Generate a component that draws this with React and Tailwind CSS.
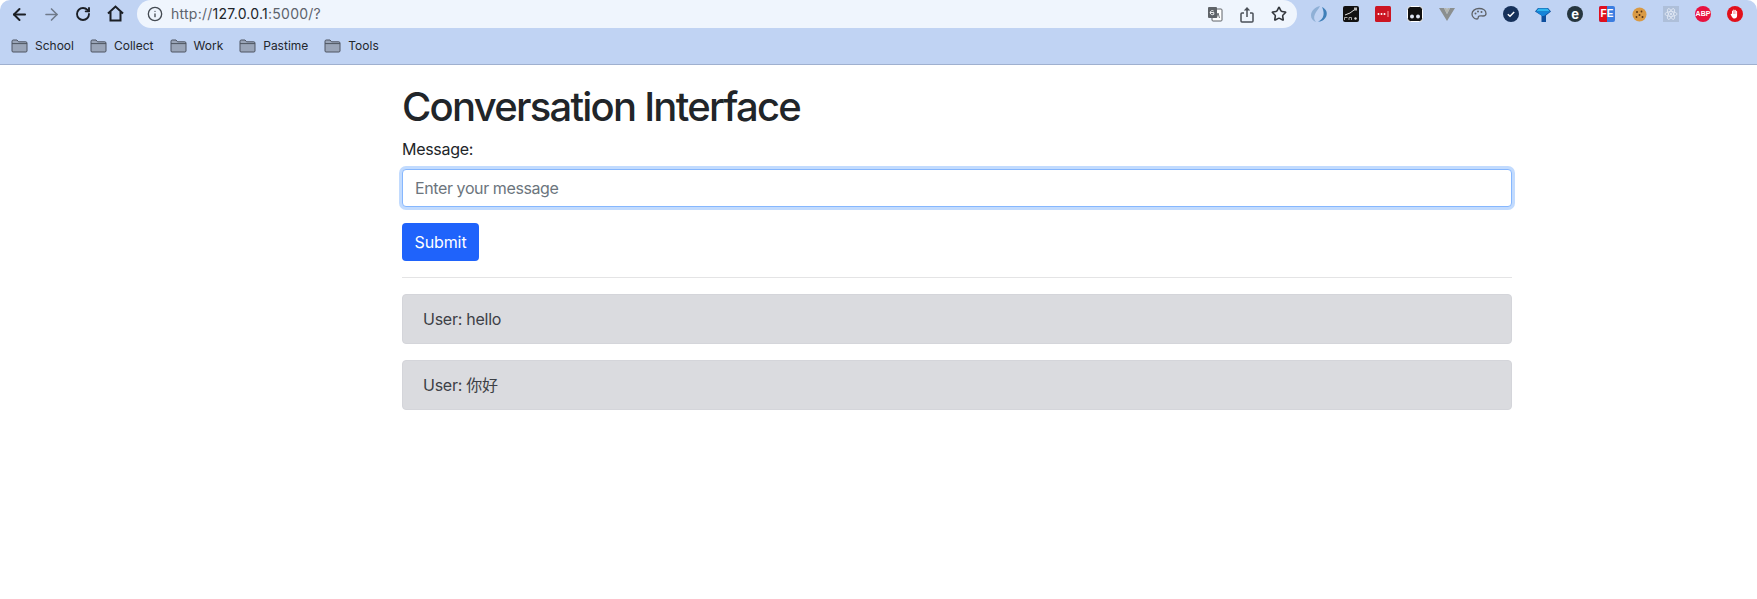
import { ArrowLeft, ArrowRight, RotateCw, Info, Star } from 'lucide-react'

const sans = "font-['Inter','Noto_Sans_CJK_SC',sans-serif]"

function Folder() {
  return (
    <svg width="17" height="14" viewBox="0 0 17 14" className="shrink-0">
      <path d="M1 12V2.200C1 1.500 1.500 1 2.200 1H6l1.600 1.800h7.200c.7 0 1.200.5 1.200 1.200v8c0 .6-.5 1-1.100 1H2c-.6 0-1-.4-1-1z" fill="#9aa5b8" stroke="#4e5562" strokeWidth="1" />
      <path d="M1 4.600h15" stroke="#4e5562" strokeWidth="1" />
    </svg>
  )
}

function Extension({ children }) {
  return <div className="w-8 h-7 flex items-center justify-center">{children}</div>
}

function Extensions() {
  return (
    <div className="flex ml-[6px]">
      <Extension>
        <svg width="18" height="18" viewBox="0 0 18 18" fill="none">
          <path d="M10 1C5 2 1 6 1 10.500c0 3 2 5.500 5 6.500-2-2-2.500-5-1-8 1-3 4-5 5-8z" fill="#8fb0d6" />
          <path d="M12 2c4 2 5.500 5 4.500 8.500C15.500 14 12 17 8 16.500c3-1 5-3.500 5.500-6.500.5-3-.5-6-1.500-8z" fill="#3f7fb8" />
        </svg>
      </Extension>
      <Extension>
        <svg width="16" height="16" viewBox="0 0 16 16">
          <rect width="16" height="16" rx="2" fill="#111" />
          <path d="M2 9l5-2 4-3" stroke="#ddd" strokeWidth="1" fill="none" />
          <rect x="11" y="1.500" width="3" height="3" fill="#bbb" />
          <circle cx="12.500" cy="12.500" r="1.200" fill="#ddd" />
          <path d="M1.500 14v-2.500h3M6 14v-2.500h2.500V14" stroke="#ccc" strokeWidth="0.800" fill="none" />
        </svg>
      </Extension>
      <Extension>
        <svg width="16" height="16" viewBox="0 0 16 16">
          <rect width="16" height="16" rx="1.500" fill="#cc1522" />
          <circle cx="3.500" cy="8" r="1" fill="#fff" />
          <circle cx="6.500" cy="8" r="1" fill="#fff" />
          <circle cx="9.500" cy="8" r="1" fill="#fff" />
          <path d="M13 5v6" stroke="#f3a0a5" strokeWidth="1" />
        </svg>
      </Extension>
      <Extension>
        <svg width="16" height="16" viewBox="0 0 16 16">
          <rect x="0.500" y="0.500" width="15" height="15" rx="3" fill="#111" stroke="#fff" />
          <circle cx="5" cy="10.500" r="2" fill="#dfe6f2" />
          <circle cx="11" cy="10.500" r="2" fill="#dfe6f2" />
        </svg>
      </Extension>
      <Extension>
        <svg width="16" height="14" viewBox="0 0 16 14">
          <path d="M0 1h5l3 6 3-6h5L8 14z" fill="#8b8f8f" />
          <path d="M5 1h2.500L8 3l.5-2H11L8 7z" fill="#b4b6ae" />
        </svg>
      </Extension>
      <Extension>
        <svg width="16" height="14" viewBox="0 0 16 14" fill="none">
          <path d="M8 1.500C4 1.500 1 4 1 7s2.500 5 5 5c1.500 0 1-1.500 1.500-2.500S10 9 12 9c2 0 3-1 3-2.500C15 3.500 12 1.500 8 1.500z" stroke="#5f6368" strokeWidth="1.300" />
          <circle cx="4.500" cy="6.500" r="1" fill="#5f6368" />
          <circle cx="7" cy="4.500" r="1" fill="#5f6368" />
          <circle cx="10.500" cy="5" r="1" fill="#5f6368" />
        </svg>
      </Extension>
      <Extension>
        <svg width="16" height="16" viewBox="0 0 16 16" fill="none">
          <circle cx="8" cy="8" r="8" fill="#16315a" />
          <path d="M4.800 8.300l2.200 2 4.200-4.300" stroke="#fff" strokeWidth="1.500" />
        </svg>
      </Extension>
      <Extension>
        <svg width="16" height="15" viewBox="0 0 16 15">
          <path d="M3 1h10l3 3.500-5 4V15H6.500V8.500L0 4.500z" fill="#0d4f9e" />
          <path d="M3.500 1.500h9l2.500 3H1z" fill="#2fb5f0" />
          <path d="M1 4.500h14L9 9H7z" fill="#1483d8" />
        </svg>
      </Extension>
      <Extension>
        <div className={`w-4 h-4 rounded-full bg-[#26363f] text-white text-[13px] leading-4 font-bold text-center ${sans}`}>e</div>
      </Extension>
      <Extension>
        <div className="w-4 h-4 relative overflow-hidden rounded-[2px] bg-[#3b7de0]">
          <div className="w-2 h-4 bg-[#e0101e]" />
          <span className="absolute inset-0 text-white text-[10px] leading-4 font-extrabold text-center font-['Liberation_Sans',sans-serif]">FE</span>
        </div>
      </Extension>
      <Extension>
        <svg width="15" height="15" viewBox="0 0 15 15">
          <circle cx="7.500" cy="7.500" r="7" fill="#d99a45" />
          <circle cx="5" cy="5" r="1" fill="#5a3415" />
          <circle cx="9.500" cy="4.500" r="0.900" fill="#5a3415" />
          <circle cx="7.500" cy="8" r="1" fill="#5a3415" />
          <circle cx="4.500" cy="10" r="0.900" fill="#5a3415" />
          <circle cx="10.500" cy="10" r="1" fill="#5a3415" />
        </svg>
      </Extension>
      <Extension>
        <svg width="16" height="16" viewBox="0 0 16 16" fill="none">
          <rect width="16" height="16" fill="#aebfd9" />
          <g stroke="#e3eaf5" strokeWidth="0.800">
            <ellipse cx="8" cy="8" rx="6" ry="2.400" />
            <ellipse cx="8" cy="8" rx="6" ry="2.400" transform="rotate(60 8 8)" />
            <ellipse cx="8" cy="8" rx="6" ry="2.400" transform="rotate(120 8 8)" />
          </g>
          <circle cx="8" cy="8" r="1.100" fill="#e3eaf5" />
        </svg>
      </Extension>
      <Extension>
        <div className="w-4 h-4 rounded-full bg-[#e8123f] text-white text-[7px] leading-4 font-bold text-center font-['Liberation_Sans',sans-serif]">ABP</div>
      </Extension>
      <Extension>
        <svg width="16" height="16" viewBox="0 0 16 16">
          <circle cx="8" cy="8" r="8" fill="#e2101a" />
          <path d="M5 8V5.200c0-.8 1-.8 1 0V8h.3V4c0-.8 1.100-.8 1.100 0v4h.3V4.300c0-.8 1.100-.8 1.100 0V8h.3V5.300c0-.8 1-.8 1 0v4.500c0 1.600-1 2.700-2.600 2.700-1.300 0-2-.6-2.500-1.500L3.800 8.700c-.4-.7.400-1.200.9-.7z" fill="#fff" />
        </svg>
      </Extension>
    </div>
  )
}

function Toolbar() {
  return (
    <div className="h-7 flex items-center">
      <div className="w-[131px] pl-[3px] flex text-[#1b1f25]">
        <div className="w-8 flex justify-center"><ArrowLeft size={19} strokeWidth={2.500} /></div>
        <div className="w-8 flex justify-center text-[#6f7a8a]"><ArrowRight size={19} strokeWidth={2} /></div>
        <div className="w-8 flex justify-center"><RotateCw size={16} strokeWidth={2.800} className="mt-px" /></div>
        <div className="w-8 flex justify-center">
          <svg width="17" height="17" viewBox="0 0 17 17" fill="none">
            <path d="M1 8.500L8.500 1.500 16 8.500M3.500 7v8.500h10V7" stroke="#1b1f25" strokeWidth="2" />
          </svg>
        </div>
      </div>
      <div className="ml-[6px] w-[1160px] h-7 bg-[#eff5fd] rounded-full flex items-center pl-[10px] pr-[2px]">
        <Info size={16} strokeWidth={2} className="text-[#444a52]" />
        <span className="ml-[8px] text-sm text-[#5d636c] tracking-[0.25px]">
          http://<span className="text-[#20242a]">127.0.0.1</span>:5000/?
        </span>
        <div className="ml-auto flex text-[#4a4f57]">
          <div className="w-8 flex justify-center">
            <svg width="16" height="16" viewBox="0 0 16 16">
              <rect x="5" y="3" width="10" height="12" rx="1" fill="#fff" stroke="#5f6368" />
              <rect x="1" y="1" width="9" height="11" rx="1" fill="#5f6368" />
              <path d="M3.200 6.500h3.600v1.800c-1 .8-3.400.6-3.600-1.500 0-2.200 2.400-2.800 3.400-1.800" stroke="#fff" strokeWidth="0.900" fill="none" />
              <path d="M11 7l-1.500 5M11 7l1.500 5" stroke="#5f6368" strokeWidth="0.900" />
            </svg>
          </div>
          <div className="w-8 flex justify-center">
            <svg width="14" height="17" viewBox="0 0 14 17" fill="none">
              <path d="M4 7H2c-.6 0-1 .4-1 1v7c0 .6.4 1 1 1h10c.6 0 1-.4 1-1V8c0-.6-.4-1-1-1h-2" stroke="#4a4f57" strokeWidth="1.500" />
              <path d="M7 11V2" stroke="#4a4f57" strokeWidth="1.500" />
              <path d="M3.800 4.500L7 1l3.200 3.500z" fill="#4a4f57" />
            </svg>
          </div>
          <div className="w-8 flex justify-center"><Star size={16} strokeWidth={2.400} className="text-[#33373d]" /></div>
        </div>
      </div>
      <Extensions />
    </div>
  )
}

const bookmarks = ['School', 'Collect', 'Work', 'Pastime', 'Tools']

function Bookmarks() {
  return (
    <div className="h-9 flex items-center pl-[11px] gap-4 text-xs text-[#23272d]">
      {bookmarks.map(b => (
        <div key={b} className="flex items-center gap-[7px]">
          <Folder />
          <span>{b}</span>
        </div>
      ))}
    </div>
  )
}

function Message({ children }) {
  return (
    <div className="h-[50px] mb-4 flex items-center px-[20px] bg-[#dadbdf] border border-[#d4d5da] rounded-[4px] tracking-[-0.25px] text-[#3d4046]">
      {children}
    </div>
  )
}

export default function App() {
  return (
    <div className={`min-h-[599px] bg-white ${sans}`}>
      <div className="bg-[#c0d3f3] border-b border-[#9fb0cf] h-[65px] rounded-t-[10px]">
        <Toolbar />
        <Bookmarks />
      </div>
      <div className="ml-[402px] w-[1110px]">
        <h1 className="mt-[18px] text-[40px] leading-[48px] font-medium text-[#212529] tracking-[-1.75px]">Conversation Interface</h1>
        <label className="block mt-[6px] text-base leading-6 tracking-[-0.3px] text-[#212529]">Message:</label>
        <input
          placeholder="Enter your message"
          className="block mt-[8px] w-full h-[38px] px-3 bg-white border border-[#86b7fe] rounded-[4px] ring-[3px] ring-[#c2dbfe] outline-none text-base tracking-[-0.4px] placeholder:text-[#6c757d]"
        />
        <button className="block mt-4 h-[38px] w-[77px] bg-[#1f63fb] text-white rounded-[4px] tracking-[-0.1px]">Submit</button>
        <hr className="mt-4 mb-4 border-t border-[#e4e4e5]" />
        <Message>User: hello</Message>
        <Message>User: 你好</Message>
      </div>
    </div>
  )
}
